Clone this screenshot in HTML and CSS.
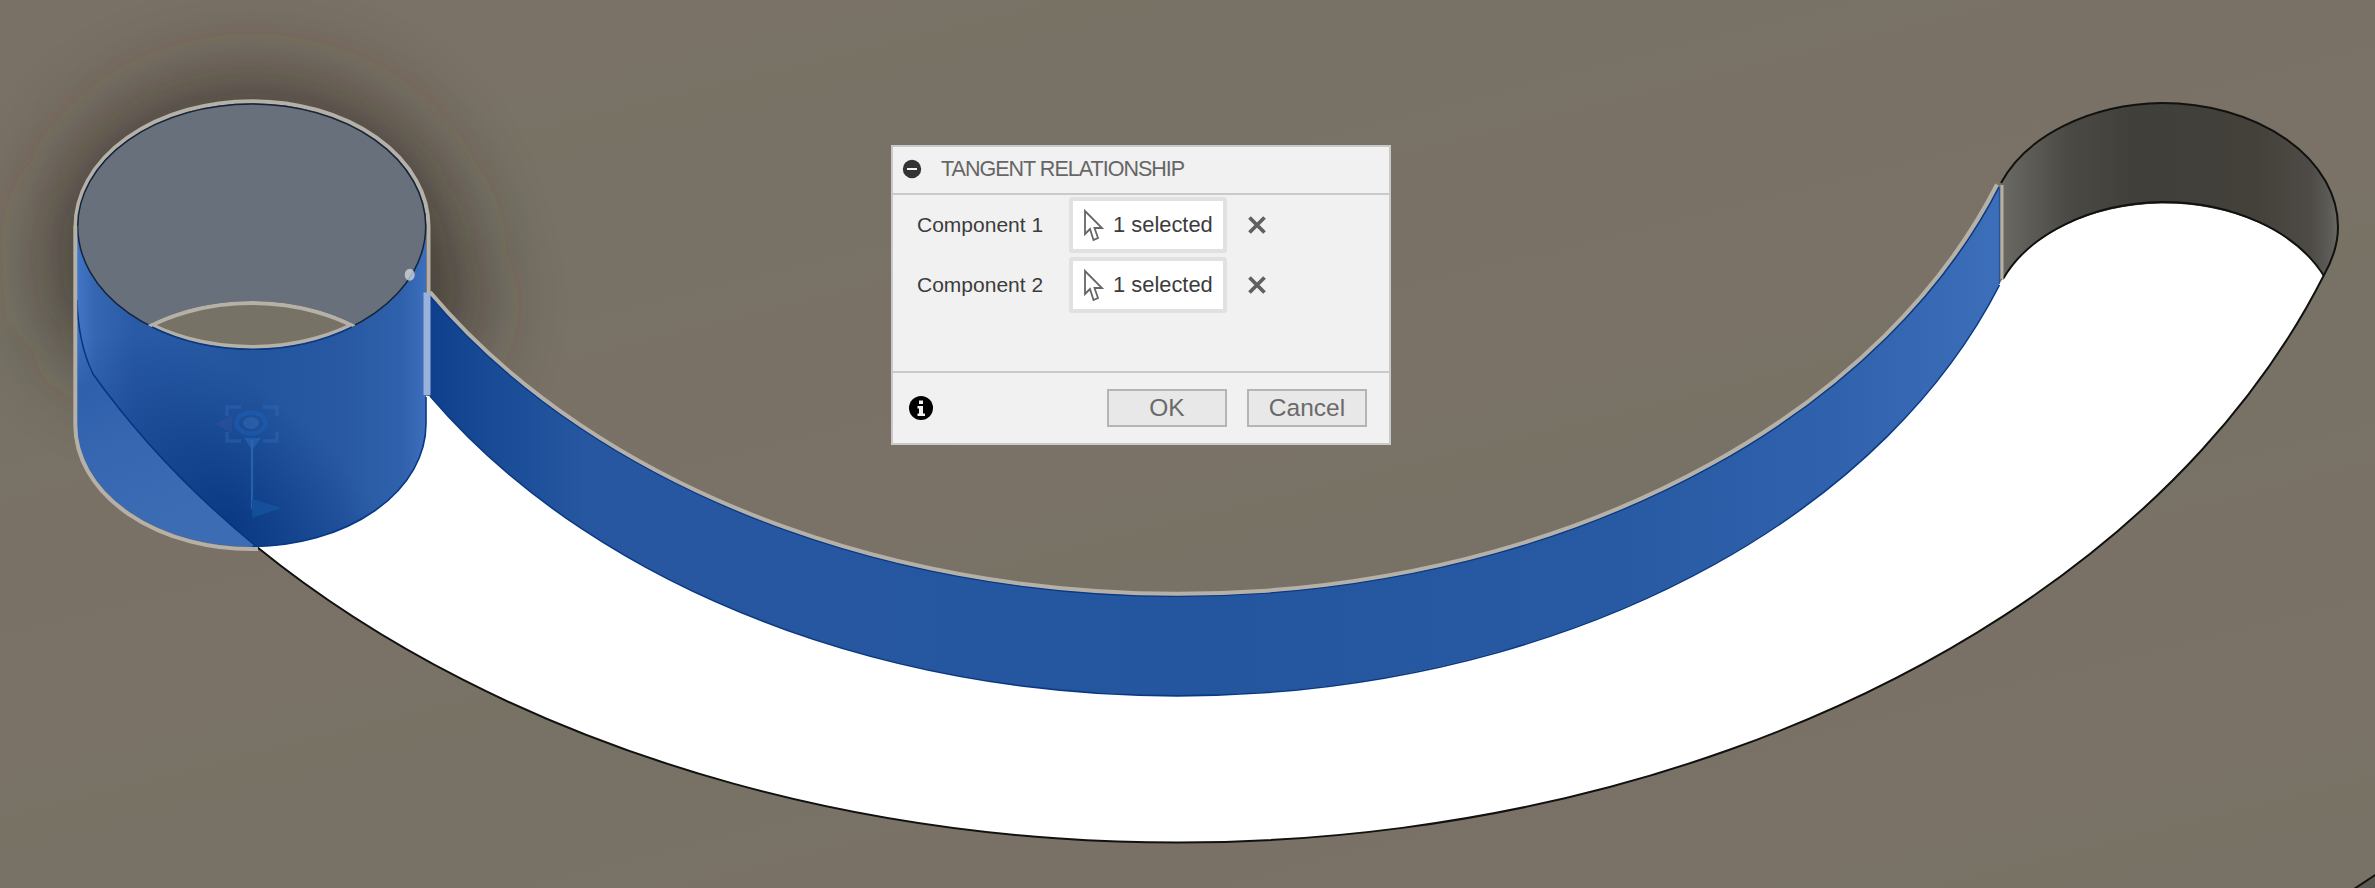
FILE: index.html
```html
<!DOCTYPE html>
<html lang="en">
<head>
<meta charset="utf-8">
<title>Tangent Relationship</title>
<link rel="stylesheet" href="styles.css">
</head>
<body>
<main class="viewport">
  <svg class="scene" width="2375" height="888" viewBox="0 0 2375 888" aria-hidden="true">
    <defs>
      <linearGradient id="ground" gradientUnits="userSpaceOnUse" x1="0" y1="0" x2="130" y2="520" spreadMethod="repeat">
        <stop offset="0" stop-color="#7a7166"/><stop offset=".35" stop-color="#7a7266"/>
        <stop offset=".6" stop-color="#777265"/><stop offset=".8" stop-color="#787266"/><stop offset="1" stop-color="#7a7166"/>
      </linearGradient>
      <filter id="soft" filterUnits="userSpaceOnUse" x="-200" y="-200" width="1000" height="900"><feGaussianBlur stdDeviation="48"/></filter>
      <linearGradient id="wall" gradientUnits="userSpaceOnUse" x1="432" y1="0" x2="2000" y2="0">
        <stop offset="0" stop-color="#0e408d"/><stop offset=".04" stop-color="#194b96"/><stop offset=".1" stop-color="#2757a1"/>
        <stop offset=".5" stop-color="#24569f"/><stop offset=".75" stop-color="#2859a3"/><stop offset=".9" stop-color="#3062ad"/><stop offset="1" stop-color="#3d6eba"/>
      </linearGradient>
      <linearGradient id="hole" gradientUnits="userSpaceOnUse" x1="2002" y1="0" x2="2338" y2="0">
        <stop offset="0" stop-color="#6a6963"/><stop offset=".08" stop-color="#5d5c56"/><stop offset=".2" stop-color="#4a4943"/><stop offset=".4" stop-color="#403f39"/>
        <stop offset=".75" stop-color="#44413b"/><stop offset=".92" stop-color="#4e4b46"/><stop offset=".98" stop-color="#605e59"/><stop offset="1" stop-color="#6d6b67"/>
      </linearGradient>
      <linearGradient id="body" gradientUnits="userSpaceOnUse" x1="76" y1="0" x2="428" y2="0">
        <stop offset="0" stop-color="#4277c8"/><stop offset=".05" stop-color="#3667b2"/><stop offset=".16" stop-color="#2a5ba6"/>
        <stop offset=".5" stop-color="#23559f"/><stop offset=".75" stop-color="#2758a1"/><stop offset=".93" stop-color="#3061ac"/><stop offset="1" stop-color="#3e70be"/>
      </linearGradient>
      <linearGradient id="outside" gradientUnits="userSpaceOnUse" x1="90" y1="310" x2="180" y2="530">
        <stop offset="0" stop-color="#2f61ad" stop-opacity="0"/><stop offset=".3" stop-color="#2f60ab"/><stop offset=".6" stop-color="#3767b1"/><stop offset="1" stop-color="#3c6db4"/>
      </linearGradient>
      <radialGradient id="contact" gradientUnits="userSpaceOnUse" cx="0" cy="0" r="1" gradientTransform="translate(232 520) rotate(46.500) scale(235 120)">
        <stop offset="0" stop-color="#07357f" stop-opacity=".85"/><stop offset=".5" stop-color="#07357f" stop-opacity=".42"/><stop offset="1" stop-color="#07357f" stop-opacity="0"/>
      </radialGradient>
      <clipPath id="topClip"><ellipse cx="251.7" cy="226.5" rx="174.5" ry="123"/></clipPath>
      <clipPath id="bodyClip"><path d="M77 226V424A174.5 122.5 0 0 0 426 424V226A174.5 123 0 0 1 77 226Z"/></clipPath>
      <clipPath id="lensClip" clip-path="url(#topClip)"><ellipse cx="251.7" cy="424" rx="174.5" ry="123"/></clipPath>
    </defs>
    <rect width="2375" height="888" fill="url(#ground)"/>

    <!-- ambient shadow round the cylinder -->
    <path d="M58 250A194 160 0 0 1 446 250L475 310L440 370H110L66 320Z" fill="#2d2820" opacity=".82" filter="url(#soft)"/>

    <!-- slot floor -->
    <path d="M160 450L257 547A1216 852 0 0 0 2324 275A176 124 0 0 0 2000 283A875 624.7 0 0 1 430 396L420 394Z" fill="#fff"/>
    <!-- far end wall -->
    <path d="M2001 183A176 124 0 0 1 2162 103A176 124 0 0 1 2338 227Q2338 250 2324 275A176 124 0 0 0 2002 280Z" fill="url(#hole)"/>
    <path d="M2001 183A176 124 0 0 1 2162 103A176 124 0 0 1 2338 227Q2338 250 2324 275" class="edge"/>
    <path d="M2324 276A176 124 0 0 0 2162 202A176 124 0 0 0 2003 279" class="edge"/>
    <path d="M257 547A1216 852 0 0 0 2324 275" class="edge"/>
    <!-- inner tangent face -->
    <path d="M426 295L430 295A875 624.7 0 0 0 1999 187V285A875 624.7 0 0 1 430 395.500H426Z" fill="url(#wall)"/>
    <path d="M430 296A875 624.7 0 0 0 1999 187M1999.500 285A875 624.7 0 0 1 430 396" class="blue-edge"/>
    <path d="M430 292A872 622 0 0 0 1997 184.500" class="glow"/>
    <path d="M2002 185V279" class="glow glow--thin"/>
    <path d="M1999.300 188V284" stroke="#194d9c" stroke-width="1" fill="none"/>

    <!-- cylinder -->
    <path d="M75.500 226.500A176 125 0 0 1 428.500 226.500V293" class="glow"/>
    <path d="M77 226V424A174.500 122.500 0 0 0 426 424V226Z" fill="url(#body)"/>
    <g clip-path="url(#bodyClip)">
      <path d="M77 300Q78 343 93 374A1216 852 0 0 0 257 547L252 570H60V300Z" fill="url(#outside)"/>
      <path d="M77 230V300Q78 343 93 374A1216 852 0 0 0 257 547L440 560V230Z" fill="url(#contact)"/>
      <path d="M77 300Q78 343 93 374A1216 852 0 0 0 257 547" fill="none" stroke="#063681" stroke-width="1.600"/>
    </g>
    <path d="M252 546.500A174.500 122.500 0 0 0 426 424V397" class="blue-edge"/>
    <ellipse cx="251.700" cy="226.500" rx="174" ry="122.500" fill="#67707b" stroke="#14243c" stroke-width="1.500"/>
    <g clip-path="url(#topClip)">
      <g clip-path="url(#lensClip)">
        <rect x="140" y="290" width="225" height="70" fill="#777266"/>
        <ellipse cx="251.700" cy="226.500" rx="173.500" ry="120.500" class="glow"/>
        <ellipse cx="251.700" cy="424" rx="173" ry="121" class="glow"/>
      </g>
    </g>
    <path d="M152 327A174 122.500 0 0 0 352 327" class="blue-edge"/>
    <path d="M75.300 226V424A176 124 0 0 0 258 549" class="glow"/>
    <path d="M423.500 292.500H430.500V395H423.500Z" fill="#9ab2da"/>
    <ellipse cx="409.700" cy="274.700" rx="5" ry="6" fill="#d5dbe2" opacity=".75"/>

    <!-- manipulator seen through the face -->
    <g opacity=".36">
      <g fill="none" stroke="#3570bd" stroke-width="3.500">
        <path d="M227 416V407H241M263 407H277V416M277 432V441H263M241 441H227V432"/>
        <ellipse cx="251" cy="423" rx="14.500" ry="10.500" stroke="#1d68c5" stroke-width="4.500"/>
      </g>
      <ellipse cx="251" cy="423" rx="8" ry="6" fill="#4278c4"/>
      <path d="M215 424L232 415V433Z" fill="#3a52a0"/>
      <path d="M244 438H261L252 450Z" fill="#3080d0"/>
      <path d="M252 440V509" stroke="#4c95dc" stroke-width="2.200"/>
      <path d="M252 499L281 508L252 518Z" fill="#1a6abb"/>
    </g>

    <path d="M2355 888L2375 875V888Z" fill="#5c5b54"/>
    <path d="M2354 889L2376 874.500" class="edge"/>
  </svg>

  <section class="dialog" aria-label="Tangent Relationship">
    <header class="dialog__header">
      <svg width="20" height="20" viewBox="0 0 20 20"><circle cx="10" cy="10" r="9.200" fill="#333"/><path d="M5 10H15" stroke="#f1f1f1" stroke-width="2"/></svg>
      <h1 class="dialog__title">TANGENT RELATIONSHIP</h1>
    </header>
    <div class="dialog__body">
      <div class="row">
        <span class="row__label">Component 1</span>
        <div class="picker">
          <svg class="picker__icon" width="22" height="34" viewBox="0 0 22 34"><path d="M2 3V26L7 21L10.500 32L15 30L11.500 20H19Z" fill="#fff" stroke="#666" stroke-width="1.800"/></svg>
          <span>1 selected</span>
        </div>
        <svg class="row__clear" width="20" height="20" viewBox="0 0 20 20"><path d="M2.500 2.500L17.500 17.500M17.500 2.500L2.500 17.500" stroke="#606060" stroke-width="3.800"/></svg>
      </div>
      <div class="row">
        <span class="row__label">Component 2</span>
        <div class="picker">
          <svg class="picker__icon" width="22" height="34" viewBox="0 0 22 34"><path d="M2 3V26L7 21L10.500 32L15 30L11.500 20H19Z" fill="#fff" stroke="#666" stroke-width="1.800"/></svg>
          <span>1 selected</span>
        </div>
        <svg class="row__clear" width="20" height="20" viewBox="0 0 20 20"><path d="M2.500 2.500L17.500 17.500M17.500 2.500L2.500 17.500" stroke="#606060" stroke-width="3.800"/></svg>
      </div>
    </div>
    <footer class="dialog__footer">
      <svg class="info" width="24" height="24" viewBox="0 0 24 24"><circle cx="12" cy="12" r="12" fill="#000"/><path d="M10 4.500H14V8H10ZM8.500 10H14V17.500H16V20H8.500V17.500H10V12.500H8.500Z" fill="#f1f1f1"/></svg>
      <button class="btn" type="button">OK</button>
      <button class="btn" type="button">Cancel</button>
    </footer>
  </section>
</main>
</body>
</html>
```
FILE: styles.css
```css
* { box-sizing: border-box; }
body { margin: 0; overflow: hidden; font-family: "Liberation Sans", Arial, sans-serif; }
.viewport { position: relative; width: 2375px; height: 888px; overflow: hidden; background: #797266; }
.scene { display: block; }
.edge { fill: none; stroke: #11110f; stroke-width: 2; }
.blue-edge { fill: none; stroke: #073985; stroke-width: 1.6; }
.glow { fill: none; stroke: #b5b0a8; stroke-width: 4; }
.glow--thin { stroke-width: 3; }

/* The dialog floats over the canvas. */
.dialog {
  position: absolute; left: 891px; top: 145px; width: 500px; height: 300px;
  display: flex; flex-direction: column;
  background: #f1f1f1; border: 2px solid #c9c9c9;
}
.dialog__header {
  height: 48px; display: flex; align-items: center; gap: 19px;
  padding: 0 9px 2px; border-bottom: 2px solid #c9c9c9;
}
.dialog__title { margin: 0; font-size: 21.5px; font-weight: 400; letter-spacing: -0.98px; line-height: 24px; color: #666; white-space: nowrap; }
.dialog__body { flex: 1; display: flex; flex-direction: column; gap: 4px; padding: 2px 0 0 24px; }
.row { height: 56px; display: flex; align-items: center; }
.row__label { width: 152px; font-size: 21px; color: #3c3c3c; white-space: nowrap; }
.picker {
  width: 158px; height: 56px; display: flex; align-items: center; gap: 8px;
  padding-left: 10px; background: #fff; border: 4px solid #e1e1e1; border-radius: 3px;
  font-size: 21.9px; color: #3c3c3c; white-space: nowrap;
}
.picker__icon { flex: none; }
.row__clear { margin-left: 20px; }
.dialog__footer {
  height: 72px; display: flex; align-items: center; gap: 20px;
  padding: 0 22px 0 16px; border-top: 2px solid #c9c9c9;
}
.info { margin-right: auto; }
.btn {
  width: 120px; height: 38px; padding: 0; border: 2px solid #b5b5b5; border-radius: 0;
  background: #e8e8e8; color: #6a6a6a; font: 24.5px/34px "Liberation Sans", Arial, sans-serif;
}
```
